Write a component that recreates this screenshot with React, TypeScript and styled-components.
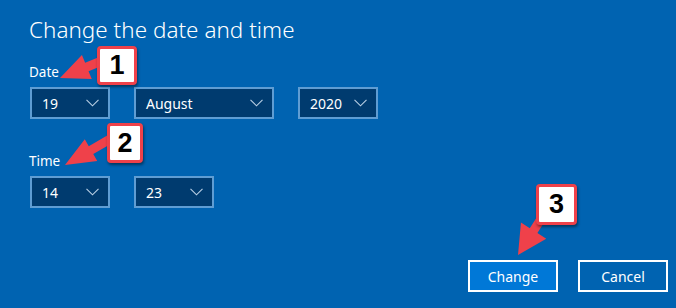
import React from "react";
import styled, { createGlobalStyle } from "styled-components";

const GlobalStyle = createGlobalStyle`
  html, body {
    margin: 0;
    padding: 0;
    background: #0063b1;
  }
  body {
    font-family: "Noto Sans", "Open Sans", sans-serif;
  }
`;

type Pt = [number, number];

// arrow polygon from tail to tip, head drawn at the tip
const arrowPoints = (tail: Pt, tip: Pt, headLen: number, headW: number, shaftW: number) => {
  const dx = tip[0] - tail[0];
  const dy = tip[1] - tail[1];
  const len = Math.sqrt(dx * dx + dy * dy);
  const ux = dx / len;
  const uy = dy / len;
  const nx = -uy;
  const ny = ux;
  const bx = tip[0] - ux * headLen;
  const by = tip[1] - uy * headLen;
  const pts: Pt[] = [
    [tail[0] + (nx * shaftW) / 2, tail[1] + (ny * shaftW) / 2],
    [bx + (nx * shaftW) / 2, by + (ny * shaftW) / 2],
    [bx + (nx * headW) / 2, by + (ny * headW) / 2],
    tip,
    [bx - (nx * headW) / 2, by - (ny * headW) / 2],
    [bx - (nx * shaftW) / 2, by - (ny * shaftW) / 2],
    [tail[0] - (nx * shaftW) / 2, tail[1] - (ny * shaftW) / 2],
  ];
  return pts.map((p) => p.join(",")).join(" ");
};

const arrows = [
  { tail: [104, 60] as Pt, tip: [60, 78] as Pt, head: 29, width: 26 },
  { tail: [112, 138] as Pt, tip: [65, 165] as Pt, head: 30, width: 25 },
  { tail: [548, 208] as Pt, tip: [518, 255] as Pt, head: 29, width: 30 },
];

const badges = [
  { n: "1", x: 97, y: 46, w: 40, h: 39 },
  { n: "2", x: 107, y: 123, w: 36, h: 40 },
  { n: "3", x: 536, y: 184, w: 41, h: 41 },
];

const Chevron = () => (
  <svg width="13" height="8" viewBox="0 0 13 8">
    <polyline points="0.5,0.8 6.5,6.8 12.5,0.8" fill="none" stroke="#b9cfe4" strokeWidth="1.1" />
  </svg>
);

const App = () => {
  return (
    <>
      <GlobalStyle />
      <Page>
        <Title>Change the date and time</Title>
        <Label>Date</Label>
        <Row>
          <Select $w={80}>
            <span>19</span>
            <Chevron />
          </Select>
          <Select $w={140}>
            <span>August</span>
            <Chevron />
          </Select>
          <Select $w={80}>
            <span>2020</span>
            <Chevron />
          </Select>
        </Row>
        <Label $top={33}>Time</Label>
        <Row $gap={24}>
          <Select $w={80}>
            <span>14</span>
            <Chevron />
          </Select>
          <Select $w={80}>
            <span>23</span>
            <Chevron />
          </Select>
        </Row>
        <Actions>
          <Button $primary>Change</Button>
          <Button>Cancel</Button>
        </Actions>

        <Overlay width="676" height="308" viewBox="0 0 676 308">
          {arrows.map((a, i) => (
            <polygon
              key={i}
              points={arrowPoints(a.tail, a.tip, a.head, a.width, 9)}
              fill="#ef414a"
            />
          ))}
        </Overlay>
        {badges.map((b) => (
          <Badge
            key={b.n}
            style={{ left: b.x, top: b.y, width: b.w, height: b.h }}
          >
            {b.n}
          </Badge>
        ))}
      </Page>
    </>
  );
};
export default App;

const Page = styled.div`
  position: relative;
  width: 676px;
  height: 308px;
  box-sizing: border-box;
  padding: 15px 8px 0 29px;
  display: flex;
  flex-direction: column;
  color: #ffffff;
  overflow: hidden;
`;

const Title = styled.h1`
  margin: 0;
  font-size: 22.4px;
  font-weight: 300;
  line-height: 30px;
  letter-spacing: 0.05px;
`;

const Label = styled.div<{ $top?: number }>`
  margin-top: ${(p) => p.$top ?? 18}px;
  font-size: 13.5px;
  line-height: 18px;
  margin-bottom: 6px;
`;

const Row = styled.div<{ $gap?: number }>`
  display: flex;
  gap: ${(p) => p.$gap ?? 24}px;
  padding-left: 1px;
`;

const Select = styled.div<{ $w: number }>`
  width: ${(p) => p.$w}px;
  height: 32px;
  box-sizing: border-box;
  border: 2px solid #5f9dd3;
  background: #003b6f;
  display: flex;
  align-items: center;
  justify-content: space-between;
  padding: 0 9px 0 10px;
  font-size: 14px;
  color: #ffffff;

  svg {
    flex-shrink: 0;
  }
`;

const Actions = styled.div`
  margin-top: auto;
  margin-bottom: 16px;
  display: flex;
  justify-content: flex-end;
  gap: 20px;
`;

const Button = styled.button<{ $primary?: boolean }>`
  width: 90px;
  height: 32px;
  box-sizing: border-box;
  border: 2px solid #ffffff;
  background: ${(p) => (p.$primary ? "#0078d7" : "transparent")};
  color: #ffffff;
  font-family: "Noto Sans", "Open Sans", sans-serif;
  font-size: 14px;
  padding: 0;
`;

const Overlay = styled.svg`
  position: absolute;
  left: 0;
  top: 0;
  pointer-events: none;
`;

const Badge = styled.div`
  position: absolute;
  box-sizing: border-box;
  border: 3px solid #ef414a;
  border-radius: 4px;
  background: #ffffff;
  box-shadow: 1px 2px 3px rgba(0, 0, 0, 0.45);
  display: flex;
  align-items: center;
  justify-content: center;
  font-family: "Liberation Sans", Arial, sans-serif;
  font-weight: 700;
  font-size: 27px;
  color: #000000;
`;
